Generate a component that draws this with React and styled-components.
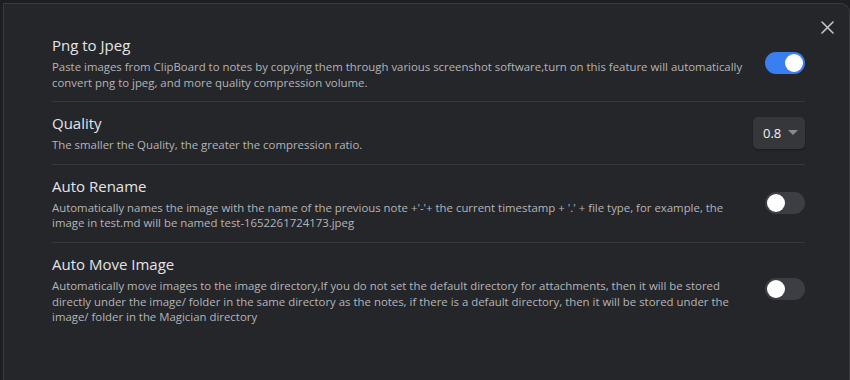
import React, { useState } from "react";
import styled, { createGlobalStyle } from "styled-components";

const Global = createGlobalStyle`
  html, body { margin: 0; padding: 0; background: #1d1e21; }
  body { font-family: "Open Sans", "Noto Sans", sans-serif; -webkit-font-smoothing: antialiased; }
  * { box-sizing: border-box; }
`;

const Page = styled.div`
  width: 850px;
  height: 380px;
  padding: 3px 0 0 3px;
  overflow: hidden;
`;

const Modal = styled.div`
  position: relative;
  width: 847px;
  height: 400px;
  background: #25262a;
  border: 1px solid #3a3b3f;
  border-top-right-radius: 9px;
  padding: 20px 44px 0 48px;
`;

const Close = styled.button`
  position: absolute;
  top: 11px;
  right: 10px;
  width: 24px;
  height: 24px;
  border: none;
  background: transparent;
  padding: 0;
  display: flex;
  align-items: center;
  justify-content: center;
  cursor: pointer;
`;

const List = styled.div`
  display: flex;
  flex-direction: column;
`;

const Item = styled.div`
  display: flex;
  align-items: center;
  gap: 20px;
  padding: 11px 0;
  border-top: 1px solid #37383c;
  &:first-child { border-top: none; }
`;

const Info = styled.div`
  flex: 1;
  min-width: 0;
`;

const Name = styled.div`
  color: #e4e4e6;
  font-size: 15px;
  line-height: 20px;
`;

const Desc = styled.div`
  color: #b4b5b8;
  font-size: 11.4px;
  line-height: 15.6px;
  padding-top: 4px;
`;

const Control = styled.div`
  flex: 0 0 auto;
  display: flex;
  align-items: center;
`;

const Toggle = styled.div`
  width: 40px;
  height: 22px;
  border-radius: 11px;
  background: ${(p) => (p.$on ? "#3a7ff2" : "#3d3e43")};
  position: relative;
  cursor: pointer;
  &::after {
    content: "";
    position: absolute;
    top: 2px;
    left: ${(p) => (p.$on ? "20px" : "2px")};
    width: 18px;
    height: 18px;
    border-radius: 50%;
    background: #ffffff;
  }
`;

const Select = styled.div`
  width: 52px;
  height: 32px;
  border-radius: 5px;
  background: #36373b;
  box-shadow: 0 1px 2px rgba(0,0,0,0.35);
  display: flex;
  align-items: center;
  padding-left: 10px;
  gap: 7px;
  color: #f0f0f0;
  font-size: 13px;
`;

const Caret = styled.span`
  width: 0;
  height: 0;
  border-left: 5px solid transparent;
  border-right: 5px solid transparent;
  border-top: 5px solid #8a8b8f;
`;

const settings = [
  {
    name: "Png to Jpeg",
    desc: "Paste images from ClipBoard to notes by copying them through various screenshot software,turn on this feature will automatically convert png to jpeg, and more quality compression volume.",
    type: "toggle",
    on: true,
  },
  {
    name: "Quality",
    desc: "The smaller the Quality, the greater the compression ratio.",
    type: "select",
  },
  {
    name: "Auto Rename",
    desc: "Automatically names the image with the name of the previous note +'-'+ the current timestamp + '.' + file type, for example, the image in test.md will be named test-1652261724173.jpeg",
    type: "toggle",
    on: false,
  },
  {
    name: "Auto Move Image",
    desc: "Automatically move images to the image directory,If you do not set the default directory for attachments, then it will be stored directly under the image/ folder in the same directory as the notes, if there is a default directory, then it will be stored under the image/ folder in the Magician directory",
    type: "toggle",
    on: false,
  },
];

export default function App() {
  const [state, setState] = useState(settings.map((s) => !!s.on));
  return (
    <Page>
      <Global />
      <Modal>
        <Close aria-label="Close">
          <svg width="13" height="13" viewBox="0 0 13 13">
            <path d="M1 1L12 12M12 1L1 12" stroke="#c4c5c8" strokeWidth="1.6" strokeLinecap="round" />
          </svg>
        </Close>
        <List>
          {settings.map((s, i) => (
            <Item key={s.name}>
              <Info>
                <Name>{s.name}</Name>
                <Desc>{s.desc}</Desc>
              </Info>
              <Control>
                {s.type === "toggle" ? (
                  <Toggle
                    $on={state[i]}
                    onClick={() => setState((st) => st.map((v, j) => (j === i ? !v : v)))}
                  />
                ) : (
                  <Select>
                    0.8
                    <Caret />
                  </Select>
                )}
              </Control>
            </Item>
          ))}
        </List>
      </Modal>
    </Page>
  );
}
